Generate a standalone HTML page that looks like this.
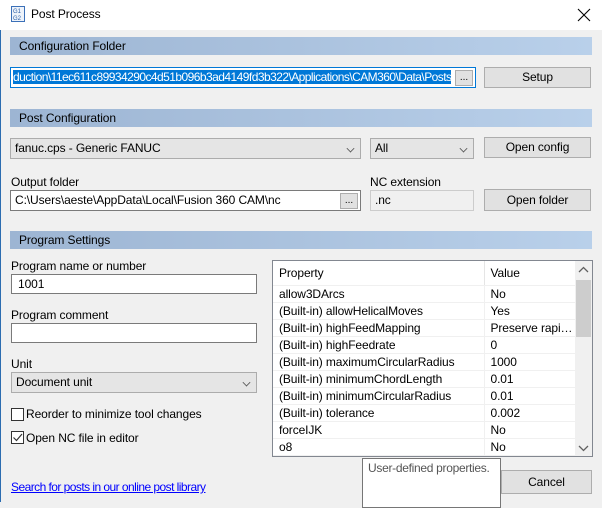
<!DOCTYPE html>
<html><head><meta charset="utf-8"><style>
*{box-sizing:border-box;margin:0;padding:0}
body{width:602px;height:502px;overflow:hidden;background:#f0f0f0;font-family:"Liberation Sans",sans-serif;font-size:12px;color:#000;position:relative;letter-spacing:-0.1px}
.a{position:absolute}
.title{left:0;top:0;width:602px;height:30px;background:#fff}
.hdr{left:10px;width:582px;height:18px;background:linear-gradient(90deg,#9db5d3,#b9d0ea);padding-left:9px;line-height:18px}
.inp{background:#fff;border:1px solid #7a7a7a;height:21px;line-height:19px;padding-left:4px;white-space:nowrap;overflow:hidden}
.btn{background:#e1e1e1;border:1px solid #adadad;text-align:center;line-height:19px}
.cmb{background:#e5e5e5;border:1px solid #acacac;line-height:19px;padding-left:4px}
.dd{position:absolute;right:6px;top:6px;width:7px;height:7px;border-right:1px solid #555;border-bottom:1px solid #555;transform:rotate(45deg) scale(.8)}
.dots{position:absolute;background:#e1e1e1;border:1px solid #adadad;width:18px;height:16px;top:2px;font-size:10px;line-height:14px;text-align:center;letter-spacing:0}
.ro{background:#f0f0f0;border:1px solid #ccc}
.cb{width:13px;height:13px;border:1px solid #333;background:#fff}
table{border-collapse:collapse;width:302px}
td{height:17px;border-bottom:1px solid #f0f0f0;padding-left:6px;white-space:nowrap}
</style></head><body>
<div class="a title"></div>
<div class="a" style="left:0;top:30px;width:1px;height:472px;background:#2b6cb0"></div>
<svg class="a" style="left:11px;top:6px" width="14" height="16"><rect x="0.5" y="0.5" width="13" height="15" fill="#eef3fa" stroke="#3b70b8"/><text x="2" y="7" font-size="6" fill="#2a5fa8" font-family="Liberation Sans">G1</text><text x="2" y="14" font-size="6" fill="#2a5fa8" font-family="Liberation Sans">G2</text></svg>
<div class="a" style="left:31px;top:7px;font-size:12px">Post Process</div>
<svg class="a" style="left:577px;top:8px" width="14" height="14"><path d="M1 1L13 13M13 1L1 13" stroke="#000" stroke-width="1.1"/></svg>

<div class="a hdr" style="top:37px">Configuration Folder</div>
<div class="a inp" style="left:10px;top:67px;width:466px;border-color:#0078d7;padding-left:2px"><span style="background:#0078d7;color:#fff;letter-spacing:-0.55px">duction\11ec611c89934290c4d51b096b3ad4149fd3b322\Applications\CAM360\Data\Posts</span><div class="dots" style="right:2px">...</div></div>
<div class="a btn" style="left:484px;top:67px;width:107px;height:21px">Setup</div>

<div class="a hdr" style="top:109px">Post Configuration</div>
<div class="a cmb" style="left:10px;top:138px;width:351px;height:21px">fanuc.cps - Generic FANUC<div class="dd"></div></div>
<div class="a cmb" style="left:370px;top:138px;width:104px;height:21px">All<div class="dd"></div></div>
<div class="a btn" style="left:484px;top:137px;width:107px;height:21px">Open config</div>
<div class="a" style="left:11px;top:175px">Output folder</div>
<div class="a" style="left:370px;top:175px">NC extension</div>
<div class="a inp" style="left:10px;top:190px;width:351px">C:\Users\aeste\AppData\Local\Fusion 360 CAM\nc<div class="dots" style="right:2px">...</div></div>
<div class="a inp ro" style="left:370px;top:190px;width:104px">.nc</div>
<div class="a btn" style="left:484px;top:189px;width:107px;height:22px;line-height:20px">Open folder</div>

<div class="a hdr" style="top:231px">Program Settings</div>
<div class="a" style="left:11px;top:259px">Program name or number</div>
<div class="a inp" style="left:11px;top:274px;width:246px;height:20px;padding-left:6px">1001</div>
<div class="a" style="left:11px;top:308px">Program comment</div>
<div class="a inp" style="left:11px;top:323px;width:246px;height:20px"></div>
<div class="a" style="left:11px;top:357px">Unit</div>
<div class="a cmb" style="left:11px;top:372px;width:246px;height:21px">Document unit<div class="dd"></div></div>
<div class="a cb" style="left:11px;top:408px"></div>
<div class="a" style="left:26px;top:407px">Reorder to minimize tool changes</div>
<div class="a cb" style="left:11px;top:431px"><svg width="11" height="11" style="position:absolute;left:0;top:0"><path d="M1.5 5.5L4.5 8.5L10 2" fill="none" stroke="#333" stroke-width="1.2"/></svg></div>
<div class="a" style="left:26px;top:431px">Open NC file in editor</div>
<div class="a" style="left:11px;top:480px;color:#0000ff;text-decoration:underline;letter-spacing:-0.55px">Search for posts in our online post library</div>

<div class="a" style="left:272px;top:260px;width:321px;height:197px;border:1px solid #828790;background:#fff;overflow:hidden">
<table>
<tr><td style="height:24px;border-right:1px solid #e5e5e5;width:211px">Property</td><td style="height:24px">Value</td></tr>
<tr><td style="border-right:1px solid #f0f0f0">allow3DArcs</td><td>No</td></tr>
<tr><td style="border-right:1px solid #f0f0f0">(Built-in) allowHelicalMoves</td><td>Yes</td></tr>
<tr><td style="border-right:1px solid #f0f0f0">(Built-in) highFeedMapping</td><td>Preserve rapi…</td></tr>
<tr><td style="border-right:1px solid #f0f0f0">(Built-in) highFeedrate</td><td>0</td></tr>
<tr><td style="border-right:1px solid #f0f0f0">(Built-in) maximumCircularRadius</td><td>1000</td></tr>
<tr><td style="border-right:1px solid #f0f0f0">(Built-in) minimumChordLength</td><td>0.01</td></tr>
<tr><td style="border-right:1px solid #f0f0f0">(Built-in) minimumCircularRadius</td><td>0.01</td></tr>
<tr><td style="border-right:1px solid #f0f0f0">(Built-in) tolerance</td><td>0.002</td></tr>
<tr><td style="border-right:1px solid #f0f0f0">forceIJK</td><td>No</td></tr>
<tr><td style="border-right:1px solid #f0f0f0">o8</td><td>No</td></tr>
</table>
<div class="a" style="left:302px;top:0;width:17px;height:195px;background:#f0f0f0"></div>
<div class="a" style="left:303px;top:19px;width:15px;height:57px;background:#cdcdcd"></div>
<svg class="a" style="left:305px;top:5px" width="11" height="8"><path d="M1 6L5.5 1.5L10 6" fill="none" stroke="#606060" stroke-width="1.3"/></svg>
<svg class="a" style="left:305px;top:183px" width="11" height="8"><path d="M1 2L5.5 6.5L10 2" fill="none" stroke="#606060" stroke-width="1.3"/></svg>
</div>

<div class="a btn" style="left:501px;top:470px;width:91px;height:24px;line-height:22px">Cancel</div>
<div class="a" style="left:362px;top:458px;width:139px;height:50px;background:#fff;border:1px solid #767676;color:#555;padding:2px 0 0 5px;letter-spacing:-0.3px">User-defined properties.</div>
</body></html>
